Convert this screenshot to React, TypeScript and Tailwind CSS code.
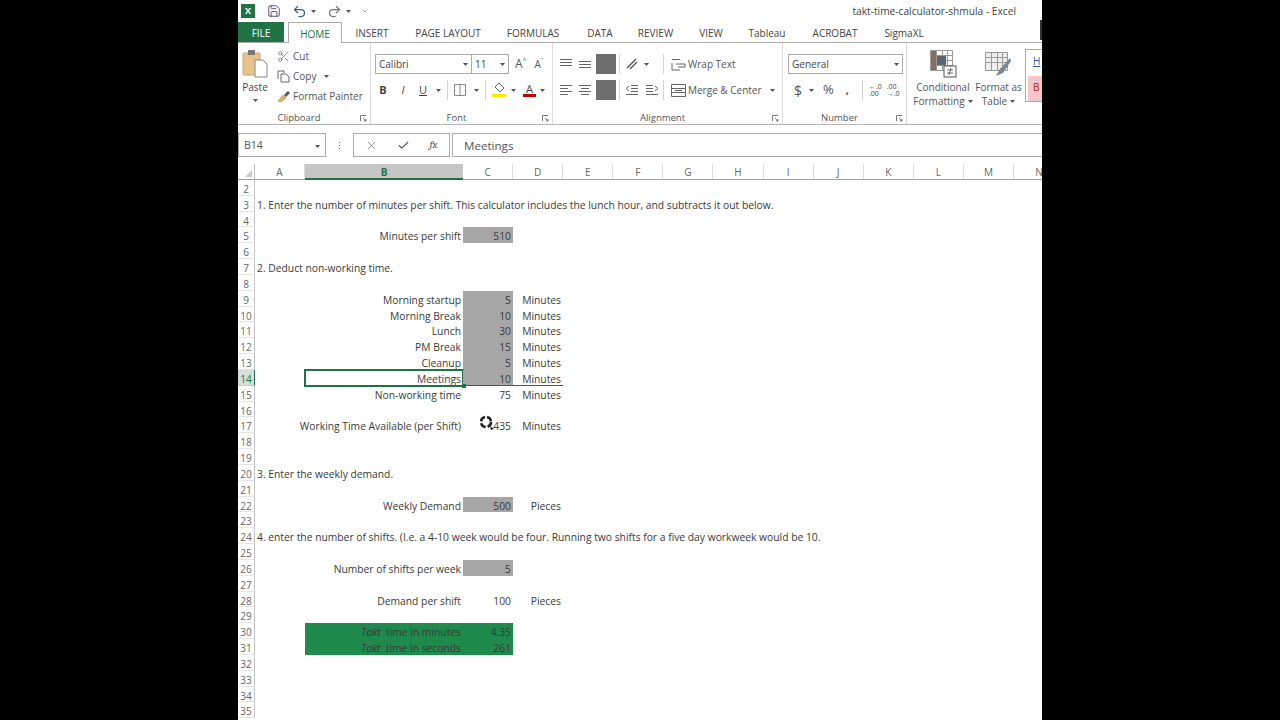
import { Check, ChevronDown, Redo2, Save, Scissors, Undo2, X } from "lucide-react";

const uiFont = { fontFamily: '"Open Sans", "Noto Sans", sans-serif' };

const tabs = [
  { label: "INSERT", w: "w-[60px]" },
  { label: "PAGE LAYOUT", w: "w-[92px]" },
  { label: "FORMULAS", w: "w-[78px]" },
  { label: "DATA", w: "w-[56px]" },
  { label: "REVIEW", w: "w-[55px]" },
  { label: "VIEW", w: "w-[56px]" },
  { label: "Tableau", w: "w-[56px]" },
  { label: "ACROBAT", w: "w-[80px]" },
  { label: "SigmaXL", w: "w-[58px]" },
];

const columns = ["C", "D", "E", "F", "G", "H", "I", "J", "K", "L", "M"];

type Row = {
  n: number;
  a?: string;
  b?: string;
  c?: string;
  d?: string;
  input?: boolean;
  green?: boolean;
  selected?: boolean;
  line?: boolean;
};

const rows: Row[] = [
  { n: 2 },
  { n: 3, a: "1. Enter the number of minutes per shift. This calculator includes the lunch hour, and subtracts it out below." },
  { n: 4 },
  { n: 5, b: "Minutes per shift", c: "510", input: true },
  { n: 6 },
  { n: 7, a: "2. Deduct non-working time." },
  { n: 8 },
  { n: 9, b: "Morning startup", c: "5", d: "Minutes", input: true },
  { n: 10, b: "Morning Break", c: "10", d: "Minutes", input: true },
  { n: 11, b: "Lunch", c: "30", d: "Minutes", input: true },
  { n: 12, b: "PM Break", c: "15", d: "Minutes", input: true },
  { n: 13, b: "Cleanup", c: "5", d: "Minutes", input: true },
  { n: 14, b: "Meetings", c: "10", d: "Minutes", input: true, selected: true, line: true },
  { n: 15, b: "Non-working time", c: "75", d: "Minutes" },
  { n: 16 },
  { n: 17, b: "Working Time Available (per Shift)", c: "435", d: "Minutes" },
  { n: 18 },
  { n: 19 },
  { n: 20, a: "3. Enter the weekly demand." },
  { n: 21 },
  { n: 22, b: "Weekly Demand", c: "500", d: "Pieces", input: true },
  { n: 23 },
  { n: 24, a: "4. enter the number of shifts. (I.e. a 4-10 week would be four. Running two shifts for a five day workweek would be 10." },
  { n: 25 },
  { n: 26, b: "Number of shifts per week", c: "5", input: true },
  { n: 27 },
  { n: 28, b: "Demand per shift", c: "100", d: "Pieces" },
  { n: 29 },
  { n: 30, b: "Takt  time in minutes", c: "4.35", green: true },
  { n: 31, b: "Takt  time in seconds", c: "261", green: true },
  { n: 32 },
  { n: 33 },
  { n: 34 },
  { n: 35 },
];

const Caret = ({ className = "" }: { className?: string }) => (
  <svg width="5" height="3" viewBox="0 0 5 3" className={`shrink-0 ${className}`}>
    <path d="M0 0h5L2.5 3z" fill="#555" />
  </svg>
);

const Launcher = () => (
  <svg width="7" height="7" viewBox="0 0 7 7" className="shrink-0">
    <path d="M.5 6V.5H6M3 3l3 3M6 4v2H4" fill="none" stroke="#777" />
  </svg>
);

const Lines = ({ kind }: { kind: "top" | "mid" | "left" | "center" }) => (
  <svg width="14" height="12" viewBox="0 0 14 12" className="shrink-0">
    {kind === "top" && <path d="M1 1.5h12M1 4.5h12M1 7.5h12" stroke="#666" />}
    {kind === "mid" && <path d="M1 3.5h12M1 6.5h12M1 9.5h12" stroke="#666" />}
    {kind === "left" && <path d="M1 1.5h12M1 4.5h8M1 7.5h12M1 10.5h8" stroke="#666" />}
    {kind === "center" && <path d="M1 1.5h12M3 4.5h8M1 7.5h12M3 10.5h8" stroke="#666" />}
  </svg>
);

const DarkBox = () => <div className="h-[20px] w-[20px] shrink-0 bg-[#6f6f6f]" />;

const GroupLabel = ({ label }: { label: string }) => (
  <div className="mt-auto flex h-[12px] items-center pr-[3px]">
    <span className="flex-1 text-center text-[9.5px] text-[#555]">{label}</span>
    <Launcher />
  </div>
);

const Sep = ({ className = "" }: { className?: string }) => (
  <div className={`h-[20px] w-px shrink-0 bg-[#d4d4d4] ${className}`} />
);

function Clipboard() {
  return (
    <div className="flex h-full w-[133px] shrink-0 flex-col border-r border-[#dcdcdc]">
      <div className="flex">
        <div className="flex w-[34px] flex-col items-center pt-[6px]">
          <svg width="26" height="29" viewBox="0 0 26 29">
            <rect x="1" y="4" width="17" height="22" rx="1" fill="#e6c48a" stroke="#c8a873" />
            <rect x="6" y="1" width="7" height="5" fill="#777" />
            <path d="M13 11h8l4 4v13H13z" fill="#fff" stroke="#888" />
          </svg>
          <span className="mt-[2px] text-[10px] leading-[14px] text-[#444]">Paste</span>
          <Caret className="mt-[5px]" />
        </div>
        <div className="ml-[5px] flex flex-col pt-[3px] text-[10px] text-[#555]">
          <div className="flex h-[20px] items-center gap-[3px]">
            <Scissors size={13} strokeWidth={1.3} color="#666" />
            <span>Cut</span>
          </div>
          <div className="flex h-[20px] items-center gap-[3px]">
            <svg width="13" height="13" viewBox="0 0 13 13">
              <path d="M1 9V1h6v2M4 4h5l3 3v5H4z" fill="#fff" stroke="#666" />
            </svg>
            <span>Copy</span>
            <Caret className="ml-[5px]" />
          </div>
          <div className="flex h-[20px] items-center gap-[2px]">
            <svg width="14" height="13" viewBox="0 0 14 13">
              <path d="M1 11l5-6 3 3-5 4z" fill="#d9b36c" stroke="#a98a52" strokeWidth=".6" />
              <path d="M7 5l4-4 2 2-4 4z" fill="#555" />
            </svg>
            <span>Format Painter</span>
          </div>
        </div>
      </div>
      <GroupLabel label="Clipboard" />
    </div>
  );
}

function FontGroup() {
  return (
    <div className="flex h-full w-[182px] shrink-0 flex-col border-r border-[#dcdcdc]">
      <div className="flex items-center pl-[4px] pt-[11px]">
        <div className="flex h-[20px] w-[97px] items-center justify-between border border-[#ababab] px-[3px] text-[10px] text-[#444]">
          <span>Calibri</span>
          <Caret />
        </div>
        <div className="-ml-px flex h-[20px] w-[38px] items-center justify-between border border-[#ababab] px-[3px] text-[10px] text-[#444]">
          <span>11</span>
          <Caret />
        </div>
        <span className="ml-[6px] text-[12px] text-[#555]">A</span>
        <span className="mb-[6px] text-[7px] text-[#555]">^</span>
        <span className="ml-[8px] text-[10px] text-[#555]">A</span>
        <span className="mb-[6px] text-[7px] text-[#555]">ˇ</span>
      </div>
      <div className="mt-[6px] flex h-[20px] items-center pl-[2px] text-[11px] text-[#444]">
        <span className="w-[20px] text-center font-bold">B</span>
        <span className="w-[20px] text-center italic">I</span>
        <span className="w-[20px] text-center underline">U</span>
        <Caret className="ml-[3px]" />
        <Sep className="ml-[6px]" />
        <svg width="12" height="12" viewBox="0 0 12 12" className="ml-[6px]">
          <path d="M.5.5h11v11H.5zM6 .5v11" fill="none" stroke="#888" />
        </svg>
        <Caret className="ml-[8px]" />
        <Sep className="ml-[6px]" />
        <svg width="16" height="16" viewBox="0 0 16 16" className="ml-[5px]">
          <path d="M8 1l5 5-4 4-5-5z" fill="#fff" stroke="#666" />
          <rect x="1" y="12" width="14" height="3" fill="#ffe600" />
        </svg>
        <Caret className="ml-[4px]" />
        <div className="ml-[7px] flex w-[13px] flex-col items-center">
          <span className="text-[11px] leading-[11px] text-[#444]">A</span>
          <div className="h-[3px] w-[13px] bg-[#c00000]" />
        </div>
        <Caret className="ml-[4px]" />
      </div>
      <GroupLabel label="Font" />
    </div>
  );
}

function Alignment() {
  return (
    <div className="flex h-full w-[230px] shrink-0 flex-col border-r border-[#dcdcdc]">
      <div className="mt-[11px] flex h-[20px] items-center pl-[6px]">
        <Lines kind="top" />
        <div className="w-[5px]" />
        <Lines kind="mid" />
        <div className="ml-[4px]">
          <DarkBox />
        </div>
        <Sep className="ml-[3px]" />
        <svg width="14" height="14" viewBox="0 0 14 14" className="ml-[5px]">
          <path d="M2 11L11 2M5 12l7-7" stroke="#555" strokeWidth="1.4" />
        </svg>
        <Caret className="ml-[5px]" />
        <Sep className="ml-[14px]" />
        <svg width="15" height="13" viewBox="0 0 15 13" className="ml-[7px]">
          <path d="M1 1.5h8M1 5v7h8M5 6h9v3H7" fill="none" stroke="#666" />
        </svg>
        <span className="ml-[2px] text-[10px] text-[#555]">Wrap Text</span>
      </div>
      <div className="mt-[6px] flex h-[20px] items-center pl-[6px]">
        <Lines kind="left" />
        <div className="w-[5px]" />
        <Lines kind="center" />
        <div className="ml-[4px]">
          <DarkBox />
        </div>
        <Sep className="ml-[3px]" />
        <svg width="14" height="12" viewBox="0 0 14 12" className="ml-[5px]">
          <path d="M6 1.5h7M6 4.5h7M6 7.5h7M1 10.5h12M4 2L1 4.5 4 7" fill="none" stroke="#666" />
        </svg>
        <svg width="14" height="12" viewBox="0 0 14 12" className="ml-[6px]">
          <path d="M1 1.5h7M1 4.5h7M1 7.5h7M1 10.5h12M10 2l3 2.5L10 7" fill="none" stroke="#666" />
        </svg>
        <Sep className="ml-[4px]" />
        <svg width="15" height="13" viewBox="0 0 15 13" className="ml-[7px]">
          <path d="M.5.5h14v12H.5zM.5 4.5h14M.5 8.5h14M4 6.5h7" fill="none" stroke="#666" />
        </svg>
        <span className="ml-[2px] text-[10px] text-[#555]">Merge &amp; Center</span>
        <Caret className="ml-[8px]" />
      </div>
      <GroupLabel label="Alignment" />
    </div>
  );
}

function NumberGroup() {
  return (
    <div className="flex h-full w-[124px] shrink-0 flex-col border-r border-[#dcdcdc]">
      <div className="ml-[5px] mt-[11px] flex h-[20px] w-[115px] items-center justify-between border border-[#ababab] px-[3px] text-[10px] text-[#444]">
        <span>General</span>
        <Caret />
      </div>
      <div className="mt-[6px] flex h-[20px] items-center pl-[10px] text-[#555]">
        <span className="w-[10px] text-center text-[14px]">$</span>
        <Caret className="ml-[6px]" />
        <span className="ml-[9px] text-[13px]">%</span>
        <span className="ml-[12px] text-[11px] font-bold">,</span>
        <Sep className="ml-[13px]" />
        <div className="ml-[6px] flex flex-col text-[7px] leading-[7px] text-[#444]">
          <span>←.0</span>
          <span>.00</span>
        </div>
        <div className="ml-[5px] flex flex-col text-[7px] leading-[7px] text-[#444]">
          <span>.00</span>
          <span>→.0</span>
        </div>
      </div>
      <GroupLabel label="Number" />
    </div>
  );
}

function Styles() {
  return (
    <div className="flex h-full flex-1 pl-[7px] text-[10px] leading-[14px] text-[#555]">
      <div className="flex w-[58px] flex-col items-center pt-[7px]">
        <svg width="27" height="28" viewBox="0 0 27 28">
          <path d="M.5.5h22v20H.5zM.5 5.5h22M.5 10.5h22M.5 15.5h22M6.5.5v20M12.5.5v20M17.5.5v20" fill="#fff" stroke="#999" />
          <rect x="1" y="1" width="5" height="19" fill="#8a6d5c" />
          <rect x="7" y="6" width="9" height="9" fill="#5b6770" />
          <rect x="14" y="16" width="12" height="11" fill="#fff" stroke="#555" />
          <path d="M17 20h6M17 23h6M21 18l-2 7" stroke="#444" strokeWidth=".8" />
        </svg>
        <span className="mt-[2px] whitespace-nowrap">Conditional</span>
        <span className="flex items-center gap-[3px] whitespace-nowrap">
          Formatting
          <Caret />
        </span>
      </div>
      <div className="flex w-[53px] flex-col items-center pt-[7px]">
        <svg width="27" height="28" viewBox="0 0 27 28">
          <path d="M.5 2.5h22v18H.5zM.5 7.5h22M.5 12.5h22M6.5 2.5v18M12.5 2.5v18M17.5 2.5v18" fill="#eee" stroke="#999" />
          <path d="M25 8L14 20l-3 6 7-3 8-12z" fill="#7a8794" />
        </svg>
        <span className="mt-[2px] whitespace-nowrap">Format as</span>
        <span className="flex items-center gap-[3px] whitespace-nowrap">
          Table
          <Caret />
        </span>
      </div>
      <div className="mt-[6px] flex h-[53px] flex-1 flex-col border-y border-l border-[#ababab] pl-[2px] text-[10px]">
        <div className="h-[26px] pl-[5px] pt-[4px] text-[#2a5db0] underline">H</div>
        <div className="h-[26px] bg-[#f4c6c9] pl-[5px] pt-[4px] text-[#9c1f24]">B</div>
      </div>
    </div>
  );
}

function SheetRow({ row }: { row: Row }) {
  const fill = row.green ? "bg-[#1e8a4c]" : "";
  const inputFill = row.input ? "bg-[#a6a6a6]" : fill;
  return (
    <div className="flex h-[15.83px] text-[10.3px] leading-[18.5px] text-[#3a3a3a]">
      <div
        className={`w-[17px] shrink-0 border-r border-b text-center text-[10px] ${
          row.selected
            ? "border-r-[#217346] border-b-[#ccc] bg-[#d5dfd9] text-[#217346]"
            : "border-r-[#c4c4c4] border-b-[#e4e4e4] text-[#666]"
        }`}
      >
        {row.n}
      </div>
      <div className="w-[50px] shrink-0 whitespace-nowrap pl-[2px]">{row.a}</div>
      <div
        className={`flex w-[158px] shrink-0 justify-end whitespace-pre pr-[2px] ${fill} ${
          row.selected ? "outline-2 -outline-offset-1 outline-[#217346]" : ""
        }`}
      >
        {row.green && row.b ? (
          <span className="shrink-0">
            <span className="italic">{row.b.slice(0, 4)}</span>
            {row.b.slice(4)}
          </span>
        ) : (
          <span className="shrink-0">{row.b}</span>
        )}
      </div>
      <div
        className={`w-[50px] shrink-0 pr-[2px] text-right ${inputFill} ${row.line ? "border-b border-[#555]" : ""}`}
      >
        {row.c}
      </div>
      <div className={`w-[50px] shrink-0 pr-[2px] text-right ${row.line ? "border-b border-[#555]" : ""}`}>{row.d}</div>
    </div>
  );
}

export default function App() {
  return (
    <div className="flex h-[720px] w-[1280px] overflow-hidden bg-black" style={uiFont}>
      <div className="w-[238px] shrink-0" />
      <div className="relative flex w-[804px] shrink-0 flex-col overflow-hidden bg-white">
        {/* title bar */}
        <div className="flex h-[22px] shrink-0 items-center">
          <div className="ml-[3px] flex h-[14px] w-[14px] items-center justify-center bg-[#217346] text-[9px] font-bold text-white">
            X
          </div>
          <Save size={14} strokeWidth={1.6} color="#5b3f73" className="ml-[12px]" />
          <Undo2 size={15} strokeWidth={2} color="#3f5f7f" className="ml-[11px]" />
          <Caret className="ml-[4px]" />
          <Redo2 size={15} strokeWidth={2} color="#777" className="ml-[11px]" />
          <Caret className="ml-[4px]" />
          <ChevronDown size={8} color="#666" className="ml-[10px]" />
          <span className="ml-auto mr-[26px] pt-[1px] text-[10.2px] text-[#444]">takt-time-calculator-shmula - Excel</span>
        </div>
        {/* tabs */}
        <div className="flex h-[21px] shrink-0 items-stretch border-b border-[#ababab] text-[10px] text-[#444]">
          <div className="flex w-[46px] items-center justify-center bg-[#217346] pt-[2px] text-white">FILE</div>
          <div className="relative -mb-px ml-[4px] flex w-[54px] items-center justify-center border-x border-t border-[#ababab] bg-white pt-[2px] text-[#217346]">
            HOME
          </div>
          {tabs.map((tab) => (
            <div key={tab.label} className={`flex items-center justify-center pt-[2px] ${tab.w}`}>
              {tab.label}
            </div>
          ))}
        </div>
        {/* ribbon */}
        <div className="flex h-[82px] shrink-0 border-b border-[#b5b5b5]">
          <Clipboard />
          <FontGroup />
          <Alignment />
          <NumberGroup />
          <Styles />
        </div>
        {/* formula bar */}
        <div className="mt-[8px] flex h-[24px] shrink-0 items-stretch text-[#555]">
          <div className="flex w-[88px] items-center justify-between border border-[#ababab] px-[5px] pt-[2px] text-[10.5px]">
            <span>B14</span>
            <Caret />
          </div>
          <div className="flex w-[27px] flex-col items-center justify-center gap-[2px]">
            <div className="h-[1px] w-[1px] bg-[#666]" />
            <div className="h-[1px] w-[1px] bg-[#666]" />
            <div className="h-[1px] w-[1px] bg-[#666]" />
          </div>
          <div className="flex w-[97px] items-center justify-around border border-[#ababab] px-[2px]">
            <X size={13} strokeWidth={1.3} color="#666" />
            <Check size={13} strokeWidth={2} color="#555" />
            <span className="font-serif text-[11px] italic">fx</span>
          </div>
          <div className="ml-[2px] flex flex-1 items-center border-y border-l border-[#ababab] pl-[11px] pt-[1px] text-[11.6px]">
            Meetings
          </div>
        </div>
        {/* column headers */}
        <div className="mt-[7px] flex h-[16px] shrink-0 border-b border-[#9f9f9f] text-[10px] leading-[17px] text-[#666]">
          <div className="flex w-[17px] shrink-0 items-end justify-end border-r border-[#c4c4c4] p-[2px]">
            <div className="h-0 w-0 border-b-[7px] border-l-[7px] border-b-[#c8c8c8] border-l-transparent" />
          </div>
          <div className="w-[50px] shrink-0 border-r border-[#ddd] text-center">A</div>
          <div className="-mb-px w-[158px] shrink-0 border-b-2 border-[#217346] bg-[#c6c6c6] text-center font-bold text-[#217346]">
            B
          </div>
          {columns.map((col) => (
            <div key={col} className="w-[50.1px] shrink-0 border-r border-[#ddd] text-center">
              {col}
            </div>
          ))}
          <div className="w-[50px] shrink-0 text-center">N</div>
        </div>
        {/* sheet */}
        <div className="flex flex-col">
          {rows.map((row) => (
            <SheetRow key={row.n} row={row} />
          ))}
        </div>
        {/* fill handle on the selected cell */}
        <div className="absolute left-[224px] top-[384px] h-[4px] w-[4px] bg-[#217346]" />
        {/* busy cursor */}
        <svg width="18" height="18" viewBox="0 0 18 18" className="absolute left-[240px] top-[414px]">
          <circle cx="8" cy="8" r="5" fill="#fff" stroke="#222" strokeWidth="2.6" strokeDasharray="6 2" />
          <path d="M12 12l4 3-3 1z" fill="#222" />
        </svg>
        {/* scrap of the next window at the right edge */}
        <div className="absolute right-0 top-[20px] h-[20px] w-[2px] bg-[#333]" />
      </div>
      <div className="flex-1" />
    </div>
  );
}
